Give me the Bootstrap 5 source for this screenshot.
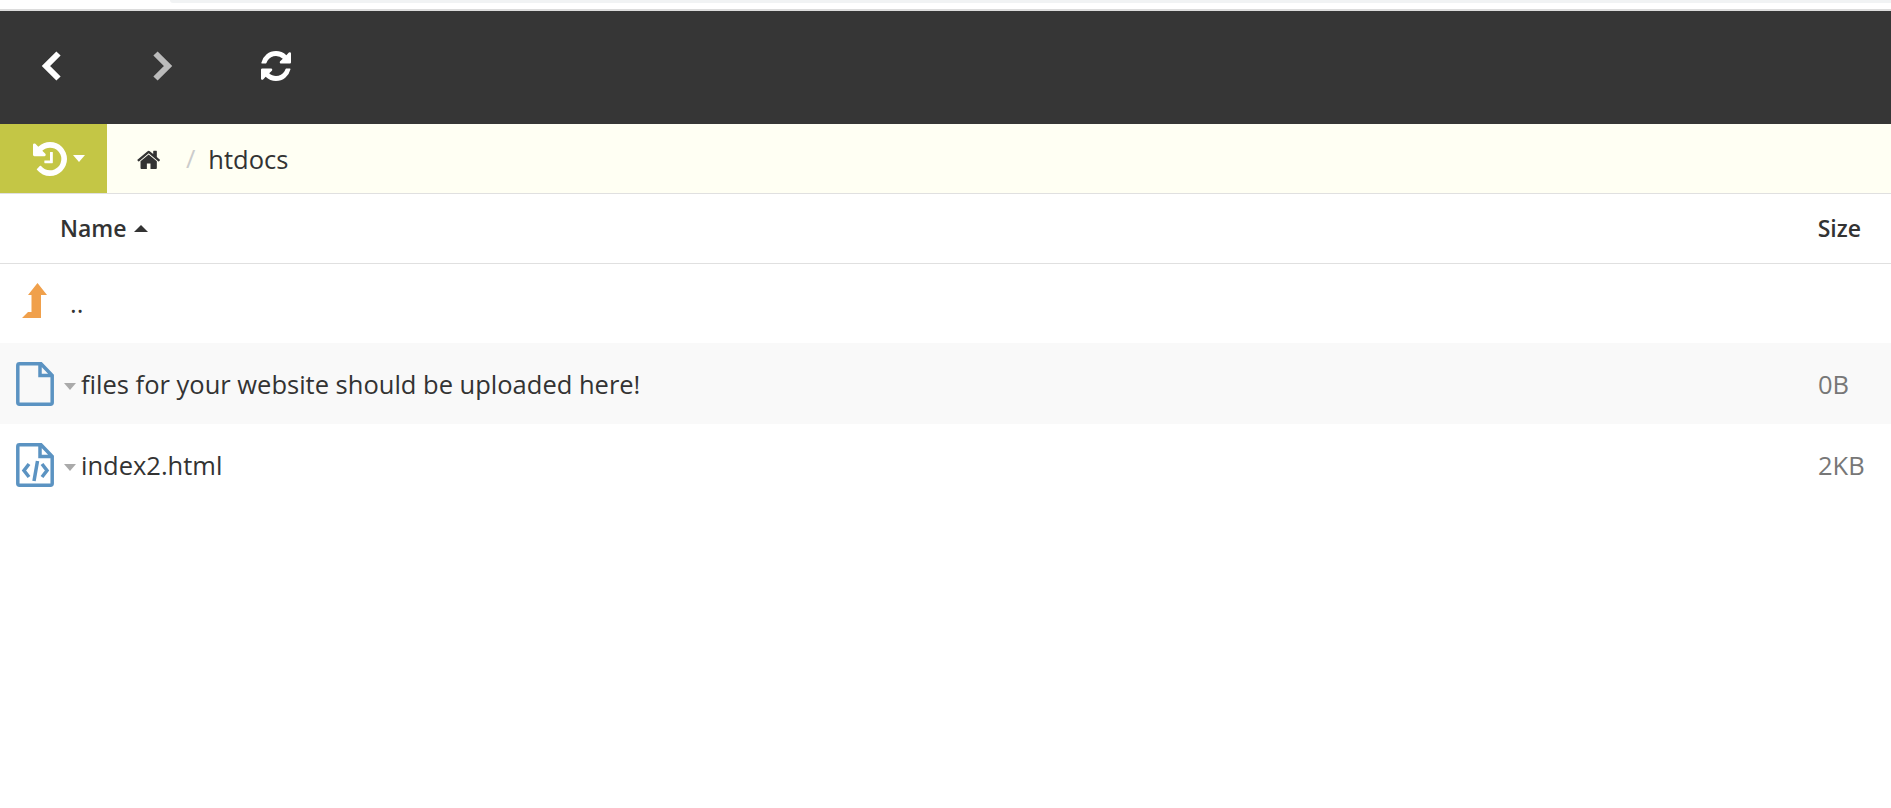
<!DOCTYPE html>
<html lang="en">
<head>
    <meta charset="UTF-8">
    <meta name="viewport" content="width=device-width, initial-scale=1.0">
    <title>htdocs</title>
    <link href="https://cdn.jsdelivr.net/npm/bootstrap@5.3.0/dist/css/bootstrap.min.css" rel="stylesheet">
    <style>
        body { background-color: #fff; font-family: "Open Sans", sans-serif; color: #333; font-size: 25.5px; overflow: hidden; }
        .browser-strip { height: 11px; border-bottom: 2px solid #dcdcdc; }
        .browser-tab { height: 3px; margin-left: 170px; background-color: #f1f3f4; border-bottom-left-radius: 8px; }
        .nav-bar { height: 113px; background-color: #363636; padding: 0 0 3px 41px; }
        .nav-btn { height: 30px; padding: 0; border: 0; background: none; }
        .nav-btn svg { display: block; }
        .back-btn { width: 112px; }
        .refresh-btn { margin-left: -4px; }
        .crumb-bar { height: 70px; background-color: #fffff3; border-bottom: 1px solid #e0e0e0; }
        .history-btn { width: 107px; height: 69px; background-color: #c4c645; border: 0; border-radius: 0; padding: 0 0 0 33px; gap: 6px; }
        .caret-down { width: 0; height: 0; border-left: 6px solid transparent; border-right: 6px solid transparent; border-top: 7px solid #fff; }
        .caret-grey { border-top-color: #aaa; margin-top: 5px; }
        .crumb-list { padding-left: 29px; color: #333; }
        .crumb-sep { color: #ccc; margin: 0 13px 0 26px; }
        .crumb-text { padding-top: 1px; }
        .head-row { height: 70px; border-bottom: 1px solid #e0e0e0; padding: 0 30px 0 60px; font-size: 23px; font-weight: 600; color: #333; }
        .caret-up { width: 0; height: 0; border-left: 7px solid transparent; border-right: 7px solid transparent; border-bottom: 7px solid #333; margin-left: 7px; }
        .file-row { height: 81px; padding: 0 26px 0 16px; }
        .file-row.up-row { height: 79px; }
        .file-row.shaded { background-color: #f9f9f9; }
        .file-size { width: 47px; color: #777; padding-top: 2px; }
        .file-icon { width: 38px; height: 44px; margin-right: 10px; }
        .up-icon { width: 25px; height: 35px; margin: 0 23px 6px 6px; }
        .file-name { margin-left: 5px; line-height: 1; padding-top: 2px; }
    </style>
</head>
<body>
    <div class="browser-strip"><div class="browser-tab"></div></div>

    <div class="nav-bar d-flex align-items-center">
        <button class="nav-btn back-btn" aria-label="Back">
            <svg width="20" height="30" viewBox="0 0 20 30"><path d="M17.500 2.500 L5 15 L17.500 27.500" fill="none" stroke="#fff" stroke-width="6"/></svg>
        </button>
        <button class="nav-btn back-btn" aria-label="Forward">
            <svg width="20" height="30" viewBox="0 0 20 30"><path d="M2.500 2.500 L15 15 L2.500 27.500" fill="none" stroke="#bbb" stroke-width="6"/></svg>
        </button>
        <button class="nav-btn refresh-btn" aria-label="Refresh">
            <svg width="30" height="30" viewBox="0 0 1536 1536"><path fill="#fff" d="M1511 928q0 5-1 7-64 268-268 434.500t-478 166.500q-146 0-282.500-55t-243.500-157l-129 129q-19 19-45 19t-45-19-19-45v-448q0-26 19-45t45-19h448q26 0 45 19t19 45-19 45l-137 137q71 66 161 102t187 36q134 0 250-65t186-179q11-17 53-117 8-23 30-23h192q13 0 22.500 9.500t9.500 22.500zm25-800v448q0 26-19 45t-45 19h-448q-26 0-45-19t-19-45 19-45l138-138q-148-137-349-137-134 0-250 65t-186 179q-11 17-53 117-8 23-30 23h-199q-13 0-22.500-9.500t-9.500-22.500v-7q65-268 270-434.500t480-166.500q146 0 284 55.500t245 156.500l130-129q19-19 45-19t45 19 19 45z"/></svg>
        </button>
    </div>

    <div class="crumb-bar d-flex align-items-center">
        <button class="history-btn btn d-flex align-items-center" aria-label="History">
            <svg width="34" height="34" viewBox="0 0 1536 1536"><path fill="#fff" d="M1536 768q0 156-61 298t-164 245-245 164-298 61q-172 0-327-72.500t-264-204.500q-7-10-6.500-22.500t8.500-20.500l137-138q10-9 25-9 16 2 23 12 73 95 179 147t225 52q104 0 198.500-40.500t163.500-109.500 109.500-163.500 40.500-198.500-40.500-198.500-109.500-163.500-163.500-109.500-198.500-40.500q-98 0-188 35.500t-160 101.500l137 138q31 30 14 69-17 40-59 40h-448q-26 0-45-19t-19-45v-448q0-42 40-59 39-17 69 14l130 129q107-101 244.500-156.500t284.500-55.500q156 0 298 61t245 164 164 245 61 298zm-640-288v448q0 14-9 23t-23 9h-320q-14 0-23-9t-9-23v-64q0-14 9-23t23-9h224v-352q0-14 9-23t23-9h64q14 0 23 9t9 23z"/></svg>
            <span class="caret-down"></span>
        </button>
        <div class="crumb-list d-flex align-items-center">
            <svg width="24" height="20" viewBox="0 128 1696 1408"><path fill="#333" d="M1472 992v480q0 26-19 45t-45 19h-384v-384h-256v384h-384q-26 0-45-19t-19-45v-480q0-1 .5-3t.5-3l575-474 575 474q1 2 1 6zm223-69l-62 74q-8 9-21 11h-3q-13 0-21-7l-692-577-692 577q-12 8-24 7-13-2-21-11l-62-74q-8-10-7-23.500t11-21.500l719-599q32-26 76-26t76 26l244 204v-195q0-14 9-23t23-9h192q14 0 23 9t9 23v408l219 182q10 8 11 21.500t-7 23.500z"/></svg>
            <span class="crumb-sep">/</span>
            <span class="crumb-text">htdocs</span>
        </div>
    </div>

    <div class="head-row d-flex align-items-center justify-content-between">
        <span class="d-flex align-items-center">Name<span class="caret-up"></span></span>
        <span>Size</span>
    </div>

    <div class="file-row up-row d-flex align-items-center">
        <svg class="up-icon" viewBox="0 0 25 35"><path d="M15.500 0 L25 12 H19 V35 H0 L6 29 H9.500 V12 H6 Z" fill="#f0a04b"/></svg>
        <span>..</span>
    </div>

    <div class="file-row shaded d-flex align-items-center justify-content-between">
        <span class="d-flex align-items-center">
            <svg class="file-icon" viewBox="0 0 38 44"><path d="M1.800 3.500 Q1.800 1.800 3.500 1.800 H25 L36.200 13.500 V40.500 Q36.200 42.200 34.500 42.200 H3.500 Q1.800 42.200 1.800 40.500 Z M24 1.800 V13.500 H36.200" fill="none" stroke="#5b93c2" stroke-width="3.500"/></svg>
            <span class="caret-down caret-grey"></span>
            <span class="file-name">files for your website should be uploaded here!</span>
        </span>
        <span class="file-size">0B</span>
    </div>

    <div class="file-row d-flex align-items-center justify-content-between">
        <span class="d-flex align-items-center">
            <svg class="file-icon" viewBox="0 0 38 44"><path d="M1.800 3.500 Q1.800 1.800 3.500 1.800 H25 L36.200 13.500 V40.500 Q36.200 42.200 34.500 42.200 H3.500 Q1.800 42.200 1.800 40.500 Z M24 1.800 V13.500 H36.200 M13 21 L8 27.500 L13 34 M26 21 L31 27.500 L26 34 M21.500 18 L18 38" fill="none" stroke="#5b93c2" stroke-width="3.500"/></svg>
            <span class="caret-down caret-grey"></span>
            <span class="file-name">index2.html</span>
        </span>
        <span class="file-size">2KB</span>
    </div>

    <script src="https://cdn.jsdelivr.net/npm/bootstrap@5.3.0/dist/js/bootstrap.bundle.min.js"></script>
</body>
</html>
